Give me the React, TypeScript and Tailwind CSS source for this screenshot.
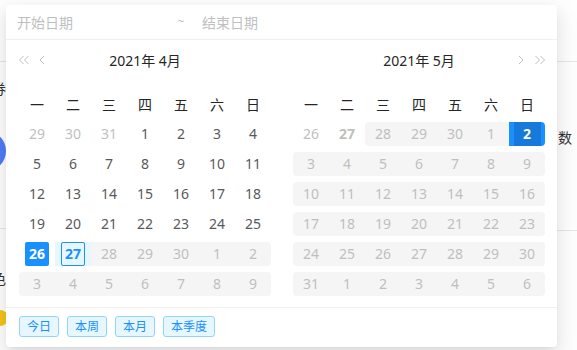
import React from "react";

type Band = "none" | "gray" | "light" | "blue";
type Cell = {
  n: number;
  muted?: boolean;
  bold?: boolean;
  band?: Band;
  rl?: boolean;
  rr?: boolean;
  inner?: "none" | "selected" | "today" | "hover";
};

const FONT = { fontFamily: '"Noto Sans", "Noto Sans CJK SC", sans-serif' };

function row(nums: number[], opts: Partial<Cell> = {}): Cell[] {
  return nums.map((n) => ({ n, ...opts }));
}

function grayRow(nums: number[]): Cell[] {
  return nums.map((n, i) => ({
    n,
    muted: true,
    band: "gray" as Band,
    rl: i === 0,
    rr: i === nums.length - 1,
  }));
}

const leftRows: Cell[][] = [
  [
    { n: 29, muted: true },
    { n: 30, muted: true },
    { n: 31, muted: true },
    ...row([1, 2, 3, 4]),
  ],
  row([5, 6, 7, 8, 9, 10, 11]),
  row([12, 13, 14, 15, 16, 17, 18]),
  row([19, 20, 21, 22, 23, 24, 25]),
  [
    { n: 26, inner: "selected", bold: true },
    { n: 27, inner: "today", bold: true, band: "light" },
    { n: 28, muted: true, band: "gray" },
    { n: 29, muted: true, band: "gray" },
    { n: 30, muted: true, band: "gray" },
    { n: 1, muted: true, band: "gray" },
    { n: 2, muted: true, band: "gray", rr: true },
  ],
  grayRow([3, 4, 5, 6, 7, 8, 9]),
];

const rightRows: Cell[][] = [
  [
    { n: 26, muted: true },
    { n: 27, muted: true, bold: true },
    { n: 28, muted: true, band: "gray", rl: true },
    { n: 29, muted: true, band: "gray" },
    { n: 30, muted: true, band: "gray" },
    { n: 1, muted: true, band: "gray" },
    { n: 2, band: "blue", rr: true, inner: "hover", bold: true },
  ],
  grayRow([3, 4, 5, 6, 7, 8, 9]),
  grayRow([10, 11, 12, 13, 14, 15, 16]),
  grayRow([17, 18, 19, 20, 21, 22, 23]),
  grayRow([24, 25, 26, 27, 28, 29, 30]),
  grayRow([31, 1, 2, 3, 4, 5, 6]),
];

const WEEK = ["一", "二", "三", "四", "五", "六", "日"];

function DayCell({ c }: { c: Cell }) {
  const bandBg =
    c.band === "gray"
      ? "bg-[#f5f5f5]"
      : c.band === "light"
      ? "bg-[#e6f7ff]"
      : c.band === "blue"
      ? "bg-[#1890ff]"
      : "";
  const radius = `${c.rl ? "rounded-l-[4px]" : ""} ${c.rr ? "rounded-r-[4px]" : ""}`;
  let innerCls = "w-[24px] h-[24px] flex items-center justify-center rounded-[2px]";
  let textCls = c.muted ? "text-[#bfbfbf]" : "text-[#595959]";
  if (c.inner === "selected") {
    innerCls += " bg-[#1890ff]";
    textCls = "text-white";
  } else if (c.inner === "today") {
    innerCls += " border border-[#1890ff] bg-[#e6f7ff]";
    textCls = "text-[#1890ff]";
  } else if (c.inner === "hover") {
    innerCls = "w-[27px] h-[24px] flex items-center justify-center bg-[#1779d9]";
    textCls = "text-white";
  }
  return (
    <div className="h-[30px] flex items-center">
      <div className={`w-full h-[24px] flex items-center justify-center ${bandBg} ${radius}`}>
        <div className={innerCls}>
          <span className={`text-[14px] leading-none ${textCls} ${c.bold ? "font-bold" : ""}`}>
            {c.n}
          </span>
        </div>
      </div>
    </div>
  );
}

function Grid({ rows }: { rows: Cell[][] }) {
  return (
    <div className="w-[252px] pt-[9px] pb-[8px]">
      <div className="grid grid-cols-7">
        {WEEK.map((w) => (
          <div
            key={w}
            className="h-[30px] flex items-center justify-center text-[14px] text-[#262626]"
          >
            {w}
          </div>
        ))}
        {rows.flat().map((c, i) => (
          <DayCell key={i} c={c} />
        ))}
      </div>
    </div>
  );
}

function DoubleLeft() {
  return (
    <svg width="12" height="10" viewBox="0 0 12 10" fill="none" stroke="#bfbfbf" strokeWidth="1">
      <path d="M5.5 1 L1.5 5 L5.5 9" />
      <path d="M10.5 1 L6.5 5 L10.5 9" />
    </svg>
  );
}
function SingleLeft() {
  return (
    <svg width="6" height="10" viewBox="0 0 6 10" fill="none" stroke="#bfbfbf" strokeWidth="1">
      <path d="M5 1 L1 5 L5 9" />
    </svg>
  );
}
function SingleRight() {
  return (
    <svg width="6" height="10" viewBox="0 0 6 10" fill="none" stroke="#bfbfbf" strokeWidth="1">
      <path d="M1 1 L5 5 L1 9" />
    </svg>
  );
}
function DoubleRight() {
  return (
    <svg width="12" height="10" viewBox="0 0 12 10" fill="none" stroke="#bfbfbf" strokeWidth="1">
      <path d="M1.5 1 L5.5 5 L1.5 9" />
      <path d="M6.5 1 L10.5 5 L6.5 9" />
    </svg>
  );
}

export default function App() {
  return (
    <div className="relative w-[577px] h-[350px] bg-white overflow-hidden" style={FONT}>
      {/* background page */}
      <div className="flex justify-between h-full text-[14px] text-[#333]">
        <div className="w-[6px] flex flex-col">
          <div className="h-[62px] border-b border-[#e8e8e8] shrink-0" />
          <div className="mt-[20px] -ml-[8px] h-[14px] leading-[14px] whitespace-nowrap">券</div>
          <div className="mt-[35px] -ml-[34px] w-[40px] h-[40px] rounded-full bg-[#4f7df9] shrink-0" />
          <div className="mt-[57px] border-t border-[#e8e8e8] shrink-0" />
          <div className="mt-[43px] -ml-[8px] h-[14px] leading-[14px] whitespace-nowrap">色</div>
          <div className="mt-[24px] -ml-[8px] w-[16px] h-[16px] rounded-full bg-[#f5c518] shrink-0" />
        </div>
        <div className="w-[20px] flex flex-col">
          <div className="h-[62px] border-b border-[#e8e8e8] shrink-0" />
          <div className="mt-[68px] ml-[1px] h-[16px] leading-[16px] whitespace-nowrap">数</div>
          <div className="mt-[84px] border-t border-[#e8e8e8] shrink-0" />
        </div>
      </div>

      {/* picker popup */}
      <div className="absolute left-[6px] top-[5px] w-[551px] h-[342px] bg-white rounded-[4px] shadow-[0_3px_6px_-4px_rgba(0,0,0,0.12),0_6px_16px_0_rgba(0,0,0,0.08),0_9px_28px_8px_rgba(0,0,0,0.05)] flex flex-col">
        <div className="h-[35px] border-b border-[#f0f0f0] flex items-center pl-[11px] text-[14px] text-[#bfbfbf]">
          <span className="w-[154px]">开始日期</span>
          <span className="w-[20px] text-center text-[12px]">~</span>
          <span className="ml-[11px]">结束日期</span>
        </div>
        <div className="flex">
          <div className="w-[276px] pl-[13px] pr-[11px] flex flex-col">
            <div className="h-[40px] flex items-center relative">
              <div className="flex items-center gap-[9px] ml-[-1px]">
                <DoubleLeft />
                <SingleLeft />
              </div>
              <div className="absolute inset-0 flex items-center justify-center text-[14px] text-[#262626] pointer-events-none">
                2021年 4月
              </div>
            </div>
            <Grid rows={leftRows} />
          </div>
          <div className="w-[275px] pl-[11px] pr-[12px] flex flex-col">
            <div className="h-[40px] flex items-center justify-end relative">
              <div className="flex items-center gap-[10px] mr-[-1px]">
                <SingleRight />
                <DoubleRight />
              </div>
              <div className="absolute inset-0 flex items-center justify-center text-[14px] text-[#262626] pointer-events-none">
                2021年 5月
              </div>
            </div>
            <Grid rows={rightRows} />
          </div>
        </div>
        <div className="border-t border-[#f0f0f0] pt-[8px] pl-[13px] flex gap-[8px]">
          {["今日", "本周", "本月", "本季度"].map((t) => (
            <div
              key={t}
              className="h-[21px] px-[7px] border border-[#91d5ff] bg-[#e6f7ff] text-[#1890ff] text-[12px] leading-[19px] rounded-[3px]"
            >
              {t}
            </div>
          ))}
        </div>
      </div>
    </div>
  );
}
